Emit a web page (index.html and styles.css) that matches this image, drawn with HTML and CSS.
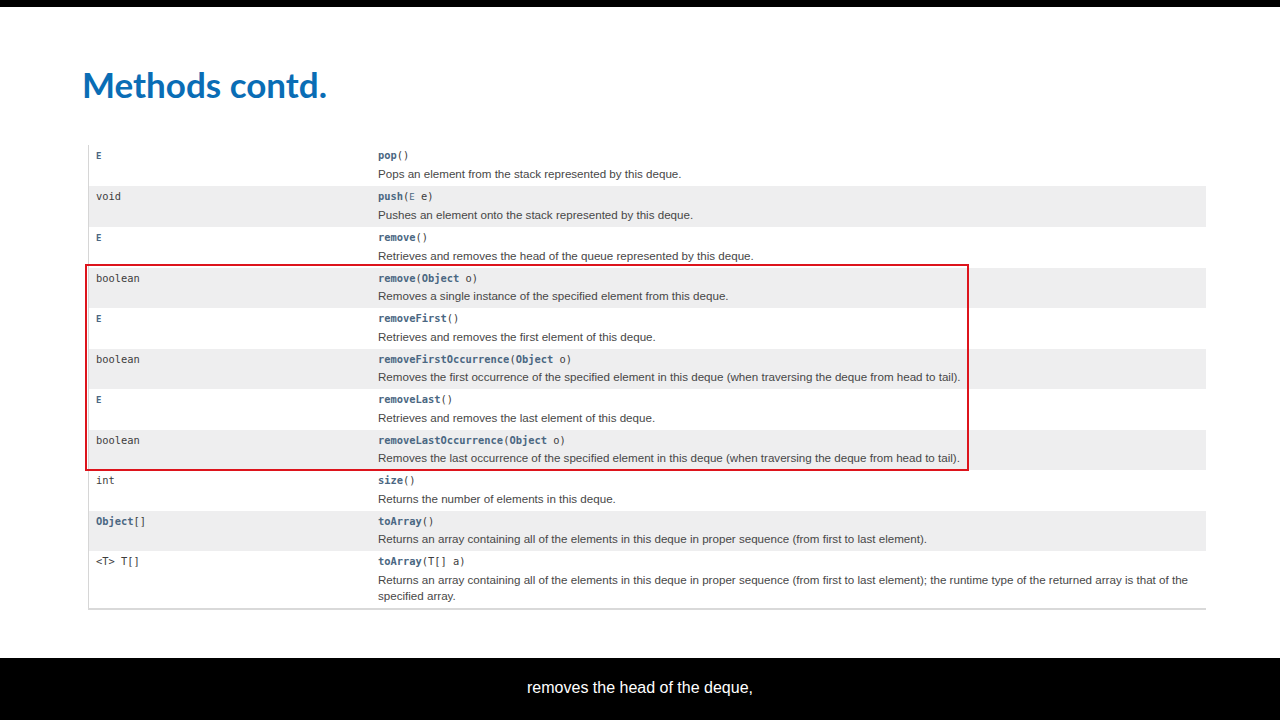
FILE: index.html
```html
<!DOCTYPE html>
<html>
<head>
<meta charset="utf-8">
<link rel="stylesheet" href="styles.css">
</head>
<body>
<div class="screen">
  <div class="topbar"></div>
  <div class="slide">
    <h1 class="title">Methods contd.</h1>
    <div class="table-wrap">
      <table class="methods">
        <tr><td class="type"><span class="tlink">E</span></td><td class="desc"><div class="sig"><b>pop</b>()</div><div class="text">Pops an element from the stack represented by this deque.</div></td></tr>
        <tr class="alt"><td class="type">void</td><td class="desc"><div class="sig"><b>push</b>(<span class="tlink">E</span> e)</div><div class="text">Pushes an element onto the stack represented by this deque.</div></td></tr>
        <tr><td class="type"><span class="tlink">E</span></td><td class="desc"><div class="sig"><b>remove</b>()</div><div class="text">Retrieves and removes the head of the queue represented by this deque.</div></td></tr>
        <tr class="alt"><td class="type">boolean</td><td class="desc"><div class="sig"><b>remove</b>(<span class="cls">Object</span> o)</div><div class="text">Removes a single instance of the specified element from this deque.</div></td></tr>
        <tr><td class="type"><span class="tlink">E</span></td><td class="desc"><div class="sig"><b>removeFirst</b>()</div><div class="text">Retrieves and removes the first element of this deque.</div></td></tr>
        <tr class="alt"><td class="type">boolean</td><td class="desc"><div class="sig"><b>removeFirstOccurrence</b>(<span class="cls">Object</span> o)</div><div class="text">Removes the first occurrence of the specified element in this deque (when traversing the deque from head to tail).</div></td></tr>
        <tr><td class="type"><span class="tlink">E</span></td><td class="desc"><div class="sig"><b>removeLast</b>()</div><div class="text">Retrieves and removes the last element of this deque.</div></td></tr>
        <tr class="alt"><td class="type">boolean</td><td class="desc"><div class="sig"><b>removeLastOccurrence</b>(<span class="cls">Object</span> o)</div><div class="text">Removes the last occurrence of the specified element in this deque (when traversing the deque from head to tail).</div></td></tr>
        <tr><td class="type">int</td><td class="desc"><div class="sig"><b>size</b>()</div><div class="text">Returns the number of elements in this deque.</div></td></tr>
        <tr class="alt"><td class="type"><span class="cls">Object</span>[]</td><td class="desc"><div class="sig"><b>toArray</b>()</div><div class="text">Returns an array containing all of the elements in this deque in proper sequence (from first to last element).</div></td></tr>
        <tr><td class="type">&lt;T&gt; T[]</td><td class="desc"><div class="sig"><b>toArray</b>(T[] a)</div><div class="text">Returns an array containing all of the elements in this deque in proper sequence (from first to last element); the runtime type of the returned array is that of the specified array.</div></td></tr>
      </table>
      <div class="highlight"></div>
    </div>
  </div>
  <div class="caption">removes the head of the deque,</div>
</div>
</body>
</html>
```

FILE: styles.css
```css
html, body {
  margin: 0;
  padding: 0;
  background: #000;
}
.screen {
  width: 1280px;
  height: 720px;
  display: flex;
  flex-direction: column;
  background: #fff;
  overflow: hidden;
}
.topbar {
  height: 7px;
  background: #000;
  flex: none;
}
.slide {
  flex: 1;
  padding: 0 74px 0 82px;
  display: flex;
  flex-direction: column;
}
.title {
  margin: 55px 0 0 0;
  font-family: Lato, "Open Sans", sans-serif;
  font-weight: 700;
  font-size: 35px;
  line-height: 44px;
  color: #0a6db5;
  height: 44px;
}
.table-wrap {
  position: relative;
  margin: 39px 0 0 6px;
  width: 1118px;
}
.methods {
  width: 100%;
  border-collapse: collapse;
  border-left: 1px solid #d6d6d6;
  border-bottom: 2px solid #d9d9d9;
  table-layout: fixed;
}
.methods td {
  vertical-align: top;
  padding: 3px 8px 3.5px 7px;
}
.methods tr {
  height: 40.5px;
}
.methods tr.alt td {
  background: #eeeeef;
}
.type {
  width: 267px;
  font-family: "DejaVu Sans Mono", monospace;
  font-size: 10.4px;
  line-height: 14px;
  color: #3d3d3d;
}
.tlink {
  font-size: 9px;
  color: #4a6782;
  font-weight: 600;
}
.cls {
  color: #4a6782;
  font-weight: 700;
}
.sig {
  font-family: "DejaVu Sans Mono", monospace;
  font-size: 10.4px;
  line-height: 14px;
  color: #3d3d3d;
}
.sig b {
  color: #4a6782;
  font-weight: 700;
}
.sig .tlink {
  font-weight: 400;
}
.text {
  margin-top: 3.5px;
  font-family: "Liberation Sans", Arial, sans-serif;
  font-size: 11.6px;
  line-height: 16.5px;
  color: #474747;
}
.highlight {
  position: absolute;
  left: -3px;
  top: 119px;
  width: 880px;
  height: 203px;
  border: 2px solid #dd141c;
  pointer-events: none;
}
.caption {
  height: 62px;
  flex: none;
  background: #000;
  color: #fff;
  font-family: "Liberation Sans", Arial, sans-serif;
  font-size: 16px;
  display: flex;
  align-items: center;
  justify-content: center;
  padding-bottom: 2px;
  box-sizing: border-box;
}
```
